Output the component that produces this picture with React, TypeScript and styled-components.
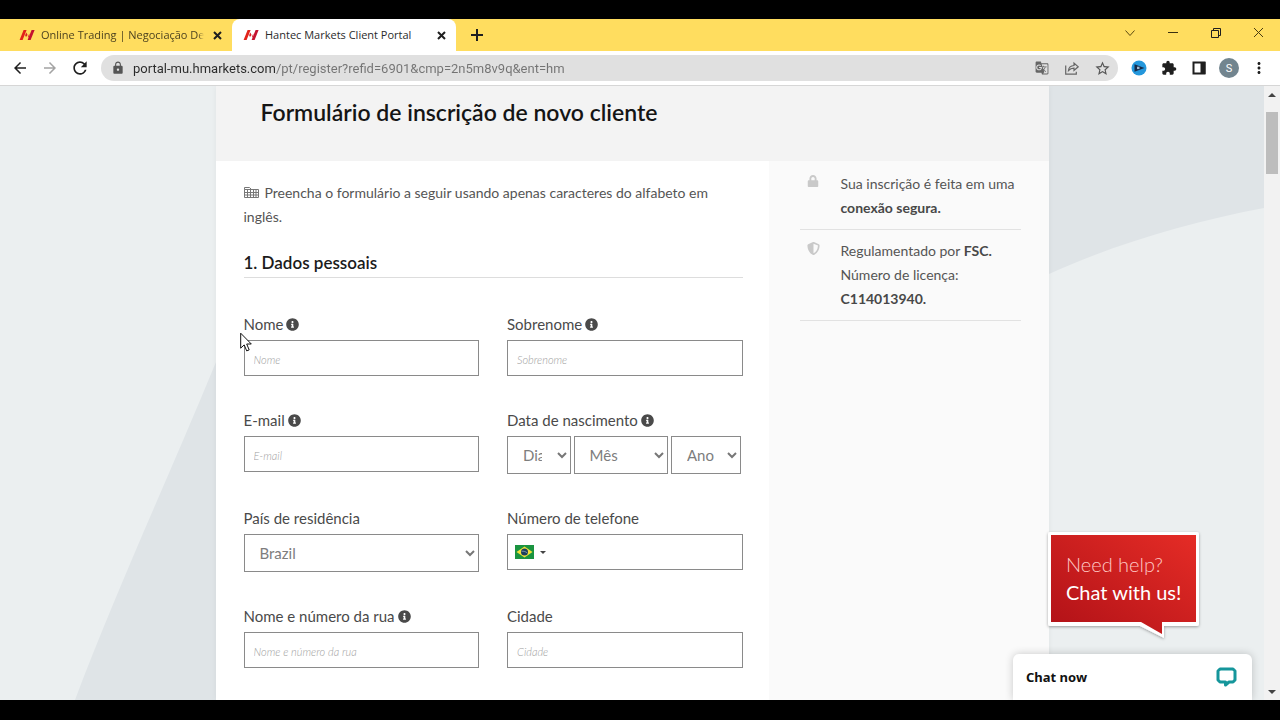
import React from "react";
import styled, { createGlobalStyle } from "styled-components";
import { FaInfoCircle, FaLock, FaShieldAlt } from "react-icons/fa";
import { MdExtension, MdGTranslate, MdLock, MdMoreVert, MdRefresh, MdStarBorder, MdArrowBack, MdArrowForward } from "react-icons/md";

const GlobalStyle = createGlobalStyle`
  *, *::before, *::after { box-sizing: border-box; }
  body { margin: 0; background: #000; font-family: Lato, "Open Sans", sans-serif; }
  button, input, select { font: inherit; color: inherit; margin: 0; border-radius: 0; }
  h1, h2, p, ul { margin: 0; padding: 0; }
`;

const Screen = styled.div`
  height: 100vh;
  display: flex;
  flex-direction: column;
  padding: 19px 0 20px;
  background: #000;
  overflow: hidden;
`;

/* ---------- browser chrome ---------- */

const TabStrip = styled.div`
  display: flex;
  align-items: stretch;
  height: 32px;
  flex: none;
  padding-left: 8px;
  background: #ffdd5f;
  font-family: "Open Sans", "Noto Sans", sans-serif;
`;

const Tab = styled.div<{ $active?: boolean }>`
  display: flex;
  align-items: center;
  gap: 6px;
  width: 224px;
  padding: 0 8px 0 11px;
  color: ${(p) => (p.$active ? "#2b2b2b" : "#4d4320")};
  background: ${(p) => (p.$active ? "#fff" : "transparent")};
  border-radius: 8px 8px 0 0;
`;

const TabTitle = styled.span<{ $faded?: boolean }>`
  flex: 1;
  min-width: 0;
  overflow: hidden;
  white-space: nowrap;
  font-size: 11px;
  line-height: 16px;
  ${(p) => p.$faded && "mask-image: linear-gradient(to right, #000 calc(100% - 6px), transparent);"}
`;

const IconButton = styled.button<{ $width?: number; $color?: string }>`
  display: flex;
  align-items: center;
  justify-content: center;
  flex: none;
  width: ${(p) => p.$width ?? 30}px;
  padding: 0;
  border: 0;
  background: none;
  color: ${(p) => p.$color ?? "#1f1f1f"};
`;

const WindowControls = styled.div`
  display: flex;
  margin-left: auto;
  padding-bottom: 5px;
`;

const Toolbar = styled.div`
  display: flex;
  align-items: center;
  flex: none;
  height: 35px;
  padding: 0 6px 0 5px;
  background: #fff;
  border-bottom: 1px solid #d6d6d6;
  font-family: Roboto, "Open Sans", sans-serif;
`;

const AddressBar = styled.div`
  display: flex;
  align-items: center;
  flex: 1;
  height: 26px;
  margin: 0 6px;
  padding: 0 1px 0 10px;
  border-radius: 13px;
  background: #e0e0e0;
  color: #555;
`;

const Address = styled.input`
  flex: 1;
  min-width: 0;
  height: 20px;
  margin-left: 8px;
  padding: 0;
  border: 0;
  outline: 0;
  font-size: 13px;
  color: transparent;
  background: linear-gradient(to right, #2a2a2a 142px, #737373 142px);
  background-clip: text;
`;

const Avatar = styled.span`
  display: flex;
  align-items: center;
  justify-content: center;
  width: 20px;
  height: 20px;
  border-radius: 50%;
  background: #72858f;
  color: #fff;
  font-size: 11px;
`;

/* ---------- page ---------- */

const Viewport = styled.div`
  display: flex;
  flex: 1;
  min-height: 0;
`;

const Page = styled.main`
  position: relative;
  flex: 1;
  min-width: 0;
  overflow: hidden;
  background: #ebeff0;
`;

const Backdrop = styled.svg`
  position: absolute;
  inset: 0;
  width: 100%;
  height: 100%;
`;

const Card = styled.div`
  position: relative;
  display: flex;
  flex-direction: column;
  max-width: 833px;
  min-height: 100%;
  margin: 0 auto;
  background: #fff;
  box-shadow: 0 0 6px rgba(0, 0, 0, 0.05);
`;

const CardHeader = styled.header`
  padding: 10px 45px 33px;
  background: #f3f3f3;
`;

const Title = styled.h1`
  font-size: 23px;
  line-height: 32px;
  font-weight: 600;
  color: #151515;
`;

const CardBody = styled.div`
  display: flex;
  flex: 1;
`;

const FormColumn = styled.form`
  flex: 1;
  min-width: 0;
  padding: 20px 26px 0 28px;
`;

const Intro = styled.p`
  font-size: 14px;
  line-height: 24px;
  color: #555;
  svg { margin-right: 6px; vertical-align: -1px; }
`;

const SectionTitle = styled.h2`
  margin: 20px 0 34px;
  border-bottom: 1px solid #ddd;
  font-size: 17px;
  line-height: 28px;
  font-weight: 600;
  color: #1b1b1b;
`;

const Fields = styled.div`
  display: grid;
  grid-template-columns: 1fr 1fr;
  gap: 32px 28px;
  align-items: start;
`;

const Field = styled.div`
  display: flex;
  flex-direction: column;
  gap: 4px;
  min-width: 0;
`;

const Label = styled.label`
  display: flex;
  align-items: center;
  gap: 3px;
  font-size: 15px;
  line-height: 24px;
  color: #4a4a4a;
`;

const TextInput = styled.input`
  width: 100%;
  height: 36px;
  padding: 2px 9px 0;
  border: 1px solid #8a8a8a;
  outline: 0;
  background: #fff;
  font-size: 11px;
  &::placeholder {
    color: #a0a0a0;
    font-style: italic;
    font-weight: 300;
    opacity: 1;
  }
`;

const SelectBox = styled.div<{ $grow?: number }>`
  position: relative;
  flex: ${(p) => p.$grow ?? 1} 1 0;
  min-width: 0;
  svg {
    position: absolute;
    right: 4px;
    top: 14px;
    pointer-events: none;
  }
`;

const Select = styled.select<{ $inset?: number }>`
  appearance: none;
  display: block;
  width: 100%;
  height: 38px;
  padding: 0 ${(p) => p.$inset ?? 25}px 0 15px;
  border: 1px solid #8a8a8a;
  outline: 0;
  background: #fff;
  font-size: 15px;
  color: #7d7d7d;
`;

const DateRow = styled.div`
  display: flex;
  gap: 3px;
  padding-right: 2px;
`;

const PhoneBox = styled.div`
  display: flex;
  align-items: center;
  height: 36px;
  border: 1px solid #8a8a8a;
  background: #fff;
`;

const CountryButton = styled.button`
  display: flex;
  align-items: center;
  gap: 6px;
  padding: 0 6px 0 7px;
  border: 0;
  background: none;
`;

const PhoneInput = styled.input`
  flex: 1;
  min-width: 0;
  border: 0;
  outline: 0;
  background: none;
  font-size: 15px;
`;

const Sidebar = styled.aside`
  flex: none;
  width: 280px;
  padding: 2px 28px 0 31px;
  background: #fafafa;
`;

const Notes = styled.ul`
  list-style: none;
`;

const Note = styled.li`
  display: flex;
  padding: 9px 0;
  border-bottom: 1px solid #e2e2e2;
  font-size: 14px;
  line-height: 24px;
  color: #555;
  b { font-weight: 700; color: #484848; }
`;

const NoteLine = styled.span`
  display: block;
`;

const NoteIcon = styled.span`
  flex: none;
  width: 41px;
  padding: 3px 0 0 7px;
  line-height: 1;
  color: #c9c9c9;
`;

/* ---------- floating parts ---------- */

const HelpBubble = styled.button`
  position: absolute;
  right: 61px;
  bottom: 58px;
  width: 159px;
  height: 114px;
  padding: 0 0 14px 22px;
  border: 0;
  background: none;
  text-align: left;
  font-size: 20px;
  line-height: 28px;
  color: #fff;
  svg { position: absolute; inset: 0; }
  span { position: relative; display: block; }
  span:first-of-type { font-weight: 300; color: #ffc9c5; }
`;

const ChatBar = styled.button`
  position: absolute;
  right: 12px;
  bottom: 0;
  display: flex;
  align-items: center;
  justify-content: space-between;
  width: 239px;
  height: 46px;
  padding: 0 15px 0 13px;
  border: 0;
  border-radius: 6px 6px 0 0;
  background: #fff;
  box-shadow: 0 0 8px rgba(0, 0, 0, 0.2);
  font-family: "Noto Sans", sans-serif;
  font-size: 13px;
  font-weight: 700;
  color: #111;
`;

const Pointer = styled.svg`
  position: absolute;
  left: 24px;
  top: 246px;
  pointer-events: none;
`;

const Scrollbar = styled.div`
  display: flex;
  flex-direction: column;
  flex: none;
  width: 16px;
  background: #f2f2f2;
`;

const ScrollTrack = styled.div`
  flex: 1;
  padding: 9px 2px 0;
`;

const ScrollThumb = styled.div`
  height: 62px;
  background: #bdbdbd;
`;

const ScrollArrow = styled.button`
  display: flex;
  align-items: center;
  justify-content: center;
  height: 17px;
  padding: 0;
  border: 0;
  background: none;
`;

/* ---------- drawings ---------- */

const Favicon = () => (
  <svg width="16" height="16" viewBox="0 0 16 16" aria-hidden="true">
    <path d="M4.600 3h3L3.600 13H.6z" fill="#e2231a" />
    <path d="M12.600 3h3l-4 10h-3z" fill="#c4122f" />
    <path d="M7.300 5.500l1.300 2.400-1.600 2-.9-1.600zM9.400 8.600l1-2.200-.2 3.600-1.200.6z" fill="#d81f26" />
  </svg>
);

const Cross = ({ size = 9, stroke = 2 }: { size?: number; stroke?: number }) => (
  <svg width={size} height={size} viewBox={`0 0 ${size} ${size}`} stroke="currentColor" strokeWidth={stroke} aria-hidden="true">
    <path d={`M1 1L${size - 1} ${size - 1}M${size - 1} 1L1 ${size - 1}`} />
  </svg>
);

const Chevron = () => (
  <svg width="10" height="10" viewBox="0 0 10 10" fill="none" stroke="#777" strokeWidth="2" aria-hidden="true">
    <path d="M1 3l4 4 4-4" />
  </svg>
);

const KeyboardIcon = () => (
  <svg width="15" height="13" viewBox="0 0 15 13" fill="none" stroke="#777" strokeWidth="1" aria-hidden="true">
    <path d="M.5 3.5h14v8H.5zM.5 6.5h14M.5 9h14M3.500 3.500v8M6.500 3.500v8M9.500 3.500v8M12 3.500v8M.5 3.500v-2h5l2 2" />
  </svg>
);

const BrazilFlag = () => (
  <svg width="19" height="14" viewBox="0 0 19 14" aria-hidden="true">
    <path d="M0 0h19v14H0z" fill="#1a9440" />
    <path d="M9.500 1.500L17.500 7l-8 5.500L1.500 7z" fill="#f4e13a" />
    <circle cx="9.500" cy="7" r="3.500" fill="#1c3f5e" />
    <path d="M6.600 6.300c2-.3 4 .2 5.700 1.700" stroke="#b9cbd6" strokeWidth=".6" fill="none" />
  </svg>
);

const Caret = ({ up = false, width = 8 }: { up?: boolean; width?: number }) => (
  <svg width={width} height={width / 2} viewBox="0 0 8 4" fill="#444" aria-hidden="true">
    <path d={up ? "M0 4l4-4 4 4z" : "M0 0h8L4 4z"} />
  </svg>
);

type TextFieldProps = { id: string; label: string; info?: boolean; type?: string };

const TextField = ({ id, label, info, type = "text" }: TextFieldProps) => (
  <Field>
    <Label htmlFor={id}>
      {label}
      {info && <FaInfoCircle size={13} />}
    </Label>
    <TextInput id={id} type={type} placeholder={label} />
  </Field>
);

export default function App() {
  return (
    <Screen>
      <GlobalStyle />
      <TabStrip>
        <Tab>
          <Favicon />
          <TabTitle $faded>Online Trading | Negociação De</TabTitle>
          <IconButton $width={14} aria-label="Fechar guia"><Cross /></IconButton>
        </Tab>
        <Tab $active>
          <Favicon />
          <TabTitle>Hantec Markets Client Portal</TabTitle>
          <IconButton $width={14} aria-label="Fechar guia"><Cross /></IconButton>
        </Tab>
        <IconButton $width={42} aria-label="Nova guia">
          <svg width="12" height="12" viewBox="0 0 12 12" stroke="currentColor" strokeWidth="2"><path d="M6 0v12M0 6h12" /></svg>
        </IconButton>
        <WindowControls>
          <IconButton $width={43} aria-label="Pesquisar guias">
            <svg width="10" height="8" viewBox="0 0 10 8" fill="none" stroke="#5c4a10"><path d="M.5 1.500L5 6.500l4.500-5" /></svg>
          </IconButton>
          <IconButton $width={43} aria-label="Minimizar">
            <svg width="10" height="2" viewBox="0 0 10 2" fill="#3a3010"><path d="M0 0h10v1H0z" /></svg>
          </IconButton>
          <IconButton $width={43} aria-label="Restaurar">
            <svg width="10" height="10" viewBox="0 0 10 10" fill="none" stroke="currentColor"><path d="M.5 2.500h7v7h-7zM2.500 2.500v-2h7v7h-2" /></svg>
          </IconButton>
          <IconButton $width={43} aria-label="Fechar" $color="#4a3c10"><Cross size={11} stroke={1} /></IconButton>
        </WindowControls>
      </TabStrip>

      <Toolbar>
        <IconButton aria-label="Voltar"><MdArrowBack size={18} /></IconButton>
        <IconButton aria-label="Avançar" $color="#a3a3a3"><MdArrowForward size={18} /></IconButton>
        <IconButton aria-label="Recarregar"><MdRefresh size={20} /></IconButton>
        <AddressBar>
          <MdLock size={14} />
          <Address aria-label="Endereço" defaultValue="portal-mu.hmarkets.com/pt/register?refid=6901&cmp=2n5m8v9q&ent=hm" />
          <IconButton aria-label="Traduzir" $color="#666"><MdGTranslate size={14} /></IconButton>
          <IconButton aria-label="Compartilhar" $color="#666">
            <svg width="14" height="14" viewBox="0 0 14 14" fill="none" stroke="currentColor" strokeWidth="1.200">
              <path d="M.7 4.500v8.700h10.600v-2.500M3.500 9.500c.3-3.300 2.200-4.800 5.500-5V2l4.200 3.800L9 9.500V7.200c-2.500 0-4 .6-5.500 2.300z" />
            </svg>
          </IconButton>
          <IconButton aria-label="Favoritos" $color="#555"><MdStarBorder size={17} /></IconButton>
        </AddressBar>
        <IconButton aria-label="Extensão">
          <svg width="16" height="16" viewBox="0 0 16 16">
            <circle cx="8" cy="8" r="7.500" fill="#2497dc" />
            <path d="M3.500 4.200L13.500 8l-10 3.800z" fill="#152a4a" />
            <path d="M6 6.700h2.500v2.400H6z" fill="#9fb8cf" />
          </svg>
        </IconButton>
        <IconButton aria-label="Extensões"><MdExtension size={16} /></IconButton>
        <IconButton aria-label="Painel lateral">
          <svg width="14" height="14" viewBox="0 0 14 14"><path d="M1.500 1.500h11v11h-11z" fill="none" stroke="currentColor" strokeWidth="2" /><path d="M8.500 1h5v12h-5z" fill="currentColor" /></svg>
        </IconButton>
        <IconButton aria-label="Perfil"><Avatar>S</Avatar></IconButton>
        <IconButton aria-label="Menu"><MdMoreVert size={18} /></IconButton>
      </Toolbar>

      <Viewport>
        <Page>
          <Backdrop viewBox="0 0 1264 614" preserveAspectRatio="none" aria-hidden="true">
            <path d="M216 276C170 388 118 500 75 614H640V0H1264V122C1190 136 1115 158 1049 188L640 400V276z" fill="#dfe4e7" />
          </Backdrop>
          <Card>
            <CardHeader>
              <Title>Formulário de inscrição de novo cliente</Title>
            </CardHeader>
            <CardBody>
              <FormColumn>
                <Intro>
                  <KeyboardIcon />
                  Preencha o formulário a seguir usando apenas caracteres do alfabeto em inglês.
                </Intro>
                <SectionTitle>1. Dados pessoais</SectionTitle>
                <Fields>
                  <TextField id="nome" label="Nome" info />
                  <TextField id="sobrenome" label="Sobrenome" info />
                  <TextField id="email" label="E-mail" type="email" info />
                  <Field>
                    <Label htmlFor="dia">Data de nascimento<FaInfoCircle size={13} /></Label>
                    <DateRow>
                      <SelectBox $grow={64}>
                        <Select id="dia" $inset={28}><option>Dia</option></Select>
                        <Chevron />
                      </SelectBox>
                      <SelectBox $grow={95}>
                        <Select aria-label="Mês"><option>Mês</option></Select>
                        <Chevron />
                      </SelectBox>
                      <SelectBox $grow={70}>
                        <Select aria-label="Ano"><option>Ano</option></Select>
                        <Chevron />
                      </SelectBox>
                    </DateRow>
                  </Field>
                  <Field>
                    <Label htmlFor="pais">País de residência</Label>
                    <SelectBox>
                      <Select id="pais"><option>Brazil</option></Select>
                      <Chevron />
                    </SelectBox>
                  </Field>
                  <Field>
                    <Label htmlFor="telefone">Número de telefone</Label>
                    <PhoneBox>
                      <CountryButton type="button" aria-label="Brasil">
                        <BrazilFlag />
                        <Caret width={6} />
                      </CountryButton>
                      <PhoneInput id="telefone" type="tel" />
                    </PhoneBox>
                  </Field>
                  <TextField id="rua" label="Nome e número da rua" info />
                  <TextField id="cidade" label="Cidade" />
                </Fields>
              </FormColumn>
              <Sidebar>
                <Notes>
                  <Note>
                    <NoteIcon><FaLock size={12} /></NoteIcon>
                    <div>
                      <NoteLine>Sua inscrição é feita em uma</NoteLine>
                      <NoteLine><b>conexão segura.</b></NoteLine>
                    </div>
                  </Note>
                  <Note>
                    <NoteIcon><FaShieldAlt size={13} /></NoteIcon>
                    <div>
                      <NoteLine>Regulamentado por <b>FSC.</b></NoteLine>
                      <NoteLine>Número de licença:</NoteLine>
                      <NoteLine><b>C114013940.</b></NoteLine>
                    </div>
                  </Note>
                </Notes>
              </Sidebar>
            </CardBody>
            <Pointer width="12" height="21" viewBox="0 0 12 21" aria-hidden="true">
              <path d="M.7 1.200v15l3.500-3.300 2.500 6 2.500-1-2.500-5.900h4.600z" fill="#fff" stroke="#111" />
            </Pointer>
          </Card>
          <HelpBubble type="button">
            <svg width="159" height="114" viewBox="0 0 159 114" aria-hidden="true">
              <defs>
                <linearGradient id="bubble-red" x1="0" y1="1" x2="1" y2="0">
                  <stop offset="0" stopColor="#b01117" />
                  <stop offset="1" stopColor="#e52c26" />
                </linearGradient>
                <filter id="bubble-shadow" x="-10%" y="-10%" width="120%" height="120%">
                  <feDropShadow dx="0" dy="1" stdDeviation="1.500" floodOpacity=".35" />
                </filter>
              </defs>
              <path d="M6 4h147a2 2 0 0 1 2 2v90a2 2 0 0 1-2 2h-33v12L96 98H6a2 2 0 0 1-2-2V6a2 2 0 0 1 2-2z" fill="#fff" filter="url(#bubble-shadow)" />
              <path d="M7 7h145v87h-34v12L97 94H7z" fill="url(#bubble-red)" />
            </svg>
            <span>Need help?</span>
            <span>Chat with us!</span>
          </HelpBubble>
          <ChatBar type="button">
            Chat now
            <svg width="21" height="20" viewBox="0 0 21 20" fill="none" stroke="#15969b" strokeWidth="3" strokeLinejoin="round" aria-hidden="true">
              <path d="M4 2h13l2 2v9l-2 2h-4l-3.500 3V15H4l-2-2V4z" />
            </svg>
          </ChatBar>
        </Page>
        <Scrollbar>
          <ScrollArrow aria-label="Rolar para cima"><Caret up /></ScrollArrow>
          <ScrollTrack><ScrollThumb /></ScrollTrack>
          <ScrollArrow aria-label="Rolar para baixo"><Caret /></ScrollArrow>
        </Scrollbar>
      </Viewport>
    </Screen>
  );
}
